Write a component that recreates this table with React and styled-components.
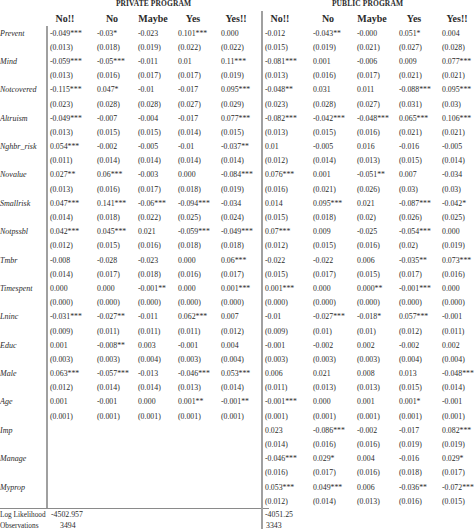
import React from "react";
import styled, { createGlobalStyle } from "styled-components";

const GlobalStyle = createGlobalStyle`
  body {
    margin: 0;
    background: #fff;
  }
`;

const columns = ["No!!", "No", "Maybe", "Yes", "Yes!!"];

const rows = [
  ["Prevent",
    ["-0.049***", "-0.03*", "-0.023", "0.101***", "0.000"], ["(0.013)", "(0.018)", "(0.019)", "(0.022)", "(0.022)"],
    ["-0.012", "-0.043**", "-0.000", "0.051*", "0.004"], ["(0.015)", "(0.019)", "(0.021)", "(0.027)", "(0.028)"]],
  ["Mind",
    ["-0.059***", "-0.05***", "-0.011", "0.01", "0.11***"], ["(0.013)", "(0.016)", "(0.017)", "(0.017)", "(0.019)"],
    ["-0.081***", "0.001", "-0.006", "0.009", "0.077***"], ["(0.013)", "(0.016)", "(0.017)", "(0.021)", "(0.021)"]],
  ["Notcovered",
    ["-0.115***", "0.047*", "-0.01", "-0.017", "0.095***"], ["(0.023)", "(0.028)", "(0.028)", "(0.027)", "(0.029)"],
    ["-0.048**", "0.031", "0.011", "-0.088***", "0.095***"], ["(0.023)", "(0.028)", "(0.027)", "(0.031)", "(0.03)"]],
  ["Altruism",
    ["-0.049***", "-0.007", "-0.004", "-0.017", "0.077***"], ["(0.013)", "(0.015)", "(0.015)", "(0.014)", "(0.015)"],
    ["-0.082***", "-0.042***", "-0.048***", "0.065***", "0.106***"], ["(0.013)", "(0.015)", "(0.016)", "(0.021)", "(0.021)"]],
  ["Nghbr_risk",
    ["0.054***", "-0.002", "-0.005", "-0.01", "-0.037**"], ["(0.011)", "(0.014)", "(0.014)", "(0.014)", "(0.014)"],
    ["0.01", "-0.005", "0.016", "-0.016", "-0.005"], ["(0.012)", "(0.014)", "(0.013)", "(0.015)", "(0.014)"]],
  ["Novalue",
    ["0.027**", "0.06***", "-0.003", "0.000", "-0.084***"], ["(0.013)", "(0.016)", "(0.017)", "(0.018)", "(0.019)"],
    ["0.076***", "0.001", "-0.051**", "0.007", "-0.034"], ["(0.016)", "(0.021)", "(0.026)", "(0.03)", "(0.03)"]],
  ["Smallrisk",
    ["0.047***", "0.141***", "-0.06***", "-0.094***", "-0.034"], ["(0.014)", "(0.018)", "(0.022)", "(0.025)", "(0.024)"],
    ["0.014", "0.095***", "0.021", "-0.087***", "-0.042*"], ["(0.015)", "(0.018)", "(0.02)", "(0.026)", "(0.025)"]],
  ["Notpssbl",
    ["0.042***", "0.045***", "0.021", "-0.059***", "-0.049***"], ["(0.012)", "(0.015)", "(0.016)", "(0.018)", "(0.018)"],
    ["0.07***", "0.009", "-0.025", "-0.054***", "0.000"], ["(0.012)", "(0.015)", "(0.016)", "(0.02)", "(0.019)"]],
  ["Tmbr",
    ["-0.008", "-0.028", "-0.023", "0.000", "0.06***"], ["(0.014)", "(0.017)", "(0.018)", "(0.016)", "(0.017)"],
    ["-0.022", "-0.022", "0.006", "-0.035**", "0.073***"], ["(0.015)", "(0.017)", "(0.015)", "(0.017)", "(0.016)"]],
  ["Timespent",
    ["0.000", "0.000", "-0.001**", "0.000", "0.001***"], ["(0.000)", "(0.000)", "(0.000)", "(0.000)", "(0.000)"],
    ["0.001***", "0.000", "0.000**", "-0.001***", "0.000"], ["(0.000)", "(0.000)", "(0.000)", "(0.000)", "(0.000)"]],
  ["Lninc",
    ["-0.031***", "-0.027**", "-0.011", "0.062***", "0.007"], ["(0.009)", "(0.011)", "(0.011)", "(0.011)", "(0.012)"],
    ["-0.01", "-0.027***", "-0.018*", "0.057***", "-0.001"], ["(0.009)", "(0.01)", "(0.01)", "(0.012)", "(0.011)"]],
  ["Educ",
    ["0.001", "-0.008**", "0.003", "-0.001", "0.004"], ["(0.003)", "(0.003)", "(0.004)", "(0.003)", "(0.004)"],
    ["-0.001", "-0.002", "0.002", "-0.002", "0.002"], ["(0.003)", "(0.003)", "(0.003)", "(0.004)", "(0.004)"]],
  ["Male",
    ["0.063***", "-0.057***", "-0.013", "-0.046***", "0.053***"], ["(0.012)", "(0.014)", "(0.014)", "(0.013)", "(0.014)"],
    ["0.006", "0.021", "0.008", "0.013", "-0.048***"], ["(0.011)", "(0.013)", "(0.013)", "(0.015)", "(0.014)"]],
  ["Age",
    ["0.001", "-0.001", "0.000", "0.001**", "-0.001**"], ["(0.001)", "(0.001)", "(0.001)", "(0.001)", "(0.001)"],
    ["-0.001***", "0.000", "0.001", "0.001*", "-0.001"], ["(0.001)", "(0.001)", "(0.001)", "(0.001)", "(0.001)"]],
  ["Imp",
    ["", "", "", "", ""], ["", "", "", "", ""],
    ["0.023", "-0.086***", "-0.002", "-0.017", "0.082***"], ["(0.014)", "(0.016)", "(0.016)", "(0.019)", "(0.019)"]],
  ["Manage",
    ["", "", "", "", ""], ["", "", "", "", ""],
    ["-0.046***", "0.029*", "0.004", "-0.016", "0.029*"], ["(0.016)", "(0.017)", "(0.016)", "(0.018)", "(0.017)"]],
  ["Myprop",
    ["", "", "", "", ""], ["", "", "", "", ""],
    ["0.053***", "0.049***", "0.006", "-0.036**", "-0.072***"], ["(0.012)", "(0.014)", "(0.013)", "(0.016)", "(0.015)"]],
];

const Table = styled.div`
  width: 474px;
  display: grid;
  grid-template-columns: 46px 51px 41px 40px 43px 40px 52px 44px 42px 43px 1fr;
  grid-template-rows: 11px 15px repeat(34, 14.2px) 11.5px 11.5px;
  color: #2b2b2b;
  font-family: "Liberation Serif", "Times New Roman", serif;
`;

const GroupTitle = styled.div`
  grid-column: span 5;
  text-align: center;
  font-size: 7.5px;
  line-height: 7px;
  font-weight: bold;
  letter-spacing: 0.1px;
`;

const HeadCell = styled.div`
  display: flex;
  align-items: center;
  padding-left: ${p => (p.$divider ? "2px" : p.$first ? "4px" : "0")};
  border-left: ${p => (p.$divider ? "2px solid #a0a0a0" : "none")};
`;

const HeadText = styled.span`
  display: inline-block;
  width: 30px;
  text-align: center;
  white-space: nowrap;
  font-size: 10px;
  font-weight: bold;
`;

const Label = styled.div`
  display: flex;
  align-items: center;
  font-size: ${p => (p.$plain ? "7.3px" : "8px")};
  font-style: ${p => (p.$plain ? "normal" : "italic")};
  white-space: nowrap;
  border-top: ${p => (p.$rule ? "1px solid #8a8a8a" : "none")};
`;

const Cell = styled.div`
  display: flex;
  align-items: center;
  font-size: 7.8px;
  white-space: nowrap;
  padding-left: ${p => (p.$divider ? "2px" : "0")};
  border-left: ${p => (p.$divider ? "2px solid #a0a0a0" : "none")};
`;

const FootCell = styled.div`
  position: relative;
  grid-column: span 5;
  display: flex;
  align-items: center;
  font-size: 7.8px;
  white-space: nowrap;
  padding-left: ${p => p.$indent || "0"};
  border-left: ${p => (p.$divider ? "2px solid #a0a0a0" : "none")};
  border-top: ${p => (p.$rule ? "1px solid #8a8a8a" : "none")};

  &::before {
    content: "";
    display: ${p => (p.$stub ? "block" : "none")};
    position: absolute;
    top: 0;
    left: 0;
    width: 6px;
    border-top: 1px solid #8a8a8a;
  }
`;

function GroupCells({ values, divider }) {
  return values.map((v, i) => (
    <Cell key={i} $divider={divider && i === 0}>{v}</Cell>
  ));
}

export default function App() {
  return (
    <>
      <GlobalStyle />
      <Table>
        <div />
        <GroupTitle>PRIVATE PROGRAM</GroupTitle>
        <GroupTitle>PUBLIC PROGRAM</GroupTitle>

        <div />
        {columns.map((c, i) => (
          <HeadCell key={"a" + i} $first={i === 0}><HeadText>{c}</HeadText></HeadCell>
        ))}
        {columns.map((c, i) => (
          <HeadCell key={"b" + i} $divider={i === 0}><HeadText>{c}</HeadText></HeadCell>
        ))}

        {rows.map(([name, privCoef, privSe, pubCoef, pubSe]) => (
          <React.Fragment key={name}>
            <Label>{name}</Label>
            <GroupCells values={privCoef} divider />
            <GroupCells values={pubCoef} divider />
            <Label />
            <GroupCells values={privSe} divider />
            <GroupCells values={pubSe} divider />
          </React.Fragment>
        ))}

        <Label $plain $rule>Log Likelihood</Label>
        <FootCell $rule $indent="5px">-4502.957</FootCell>
        <FootCell $divider $stub $indent="2px">-4051.25</FootCell>
        <Label $plain>Observations</Label>
        <FootCell $indent="14px">3494</FootCell>
        <FootCell $divider $indent="3px">3343</FootCell>
      </Table>
    </>
  );
}
